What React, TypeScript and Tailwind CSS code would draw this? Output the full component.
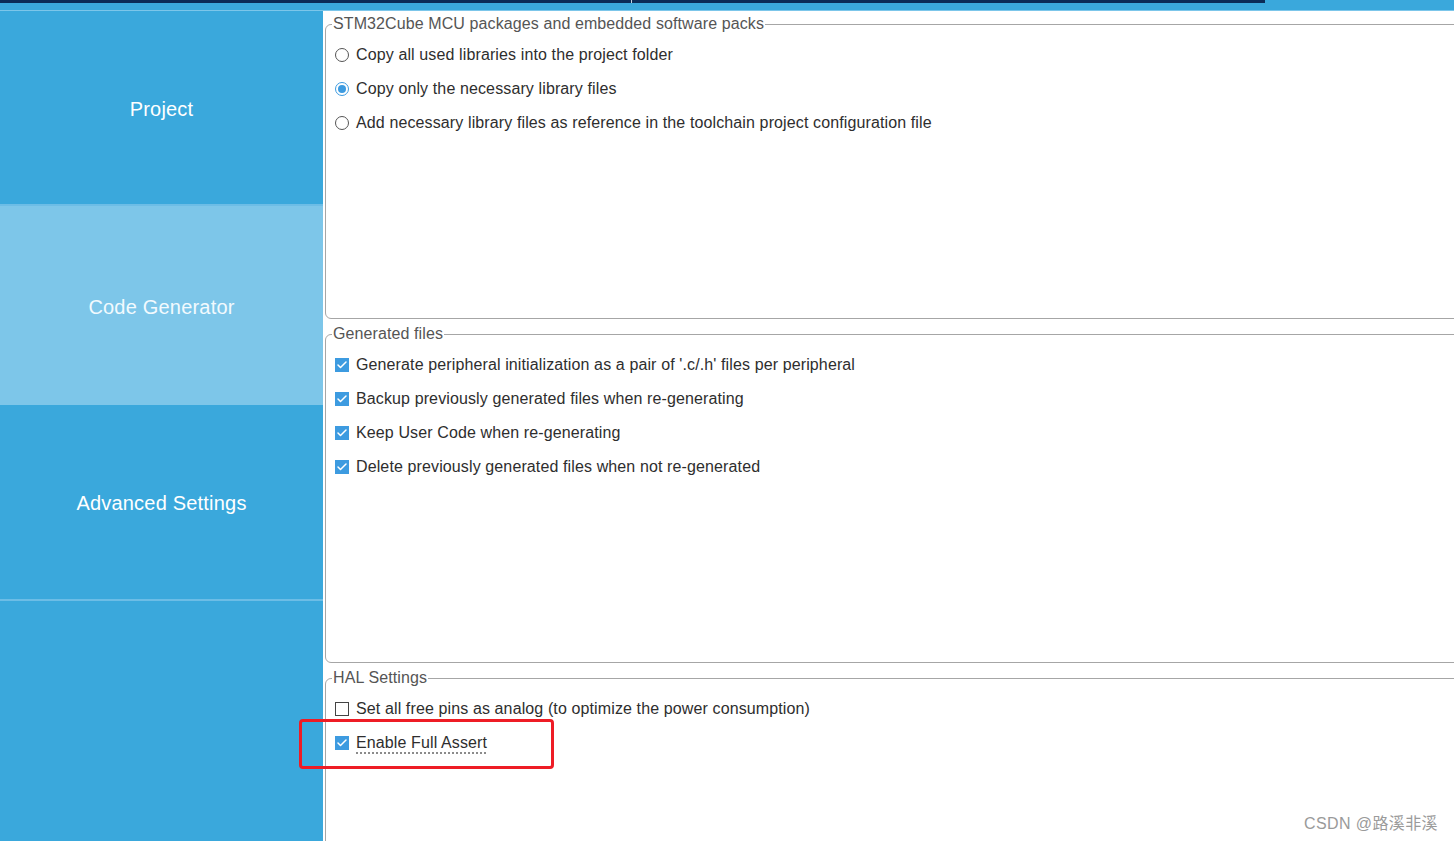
import { Check } from "lucide-react";

type Opt = { label: string; on: boolean };

const packOpts: Opt[] = [
  { label: "Copy all used libraries into the project folder", on: false },
  { label: "Copy only the necessary library files", on: true },
  { label: "Add necessary library files as reference in the toolchain project configuration file", on: false },
];

const genOpts: Opt[] = [
  { label: "Generate peripheral initialization as a pair of '.c/.h' files per peripheral", on: true },
  { label: "Backup previously generated files when re-generating", on: true },
  { label: "Keep User Code when re-generating", on: true },
  { label: "Delete previously generated files when not re-generated", on: true },
];

function Radio({ on }: { on: boolean }) {
  return (
    <span
      className={
        "flex h-[14px] w-[14px] shrink-0 items-center justify-center rounded-full border " +
        (on ? "border-[#3d9be0] bg-white" : "border-[#555] bg-white")
      }
    >
      {on && <span className="h-[8px] w-[8px] rounded-full bg-[#3d9be0]" />}
    </span>
  );
}

function Box({ on }: { on: boolean }) {
  if (!on) {
    return <span className="h-[14px] w-[14px] shrink-0 border border-[#444] bg-white" />;
  }
  return (
    <span className="flex h-[14px] w-[14px] shrink-0 items-center justify-center bg-[#3d9be0]">
      <Check size={12} strokeWidth={3} className="text-white" />
    </span>
  );
}

function Row({ children, mark }: { children: React.ReactNode; mark: React.ReactNode }) {
  return (
    <div className="flex h-[34px] items-center gap-[7px] text-[16px] tracking-[0.12px] text-[#2e2e2e]">
      {mark}
      {children}
    </div>
  );
}

function Group({ title, h, children }: { title: string; h: string; children: React.ReactNode }) {
  return (
    <fieldset className={"mr-[-20px] rounded-l-[6px] border border-[#a6a6a6] p-0 " + h}>
      <legend className="ml-[6px] px-px text-[16px] leading-[18px] tracking-[0.1px] text-[#555]">{title}</legend>
      <div className="pl-[9px] pt-[5px]">{children}</div>
    </fieldset>
  );
}

function Tab({ label, active, h }: { label: string; active?: boolean; h: string }) {
  return (
    <div
      className={
        "flex items-center justify-center pt-[2px] text-[20px] tracking-[0.2px] " +
        h +
        (active ? " bg-[#7dc6e9] text-[#f2fafe]" : " bg-[#3aa8dc] text-white")
      }
    >
      {label}
    </div>
  );
}

export default function App() {
  return (
    <div className="relative h-[841px] w-full overflow-hidden bg-white font-['Liberation_Sans',Arial,sans-serif]">
      <div className="flex h-[3px]">
        <div className="flex w-[1265px] bg-[#0b2b57]">
          <div className="w-[631px]" />
          <div className="w-px bg-[#c9d3de]" />
        </div>
        <div className="flex-1 bg-[#3aa8dc]" />
      </div>
      <div className="h-[7px] bg-[#3aa8dc]" />
      <div className="h-px bg-[#7cc6ea]" />

      <div className="flex h-[830px]">
        <div className="flex w-[323px] flex-col bg-[#3aa8dc]">
          <Tab label="Project" h="h-[193px]" />
          <div className="h-[2px] bg-[#6cbde6]" />
          <Tab label="Code Generator" active h="h-[199px]" />
          <Tab label="Advanced Settings" h="h-[194px]" />
          <div className="h-[2px] bg-[#6cbde6]" />
        </div>

        <div className="flex-1 pl-[2px] pt-[4px]">
          <Group title="STM32Cube MCU packages and embedded software packs" h="h-[304px]">
            {packOpts.map((o) => (
              <Row key={o.label} mark={<Radio on={o.on} />}>
                {o.label}
              </Row>
            ))}
          </Group>

          <div className="h-[6px]" />
          <Group title="Generated files" h="h-[338px]">
            {genOpts.map((o) => (
              <Row key={o.label} mark={<Box on={o.on} />}>
                {o.label}
              </Row>
            ))}
          </Group>

          <div className="h-[6px]" />
          <Group title="HAL Settings" h="h-[220px]">
            <Row mark={<Box on={false} />}>Set all free pins as analog (to optimize the power consumption)</Row>
            <Row mark={<Box on />}>
              <span className="underline decoration-dotted decoration-[#666] underline-offset-[5px]">
                Enable Full Assert
              </span>
            </Row>
          </Group>
        </div>
      </div>

      <div className="absolute left-[299px] top-[719px] h-[50px] w-[255px] rounded-[4px] border-[3px] border-[#ee1c25]" />

      <div className="absolute bottom-[5px] right-[16px] font-['Liberation_Sans','Noto_Sans_CJK_SC',sans-serif] text-[16px] tracking-[0.4px] text-[#9a9a9a]">
        CSDN @路溪非溪
      </div>
    </div>
  );
}
